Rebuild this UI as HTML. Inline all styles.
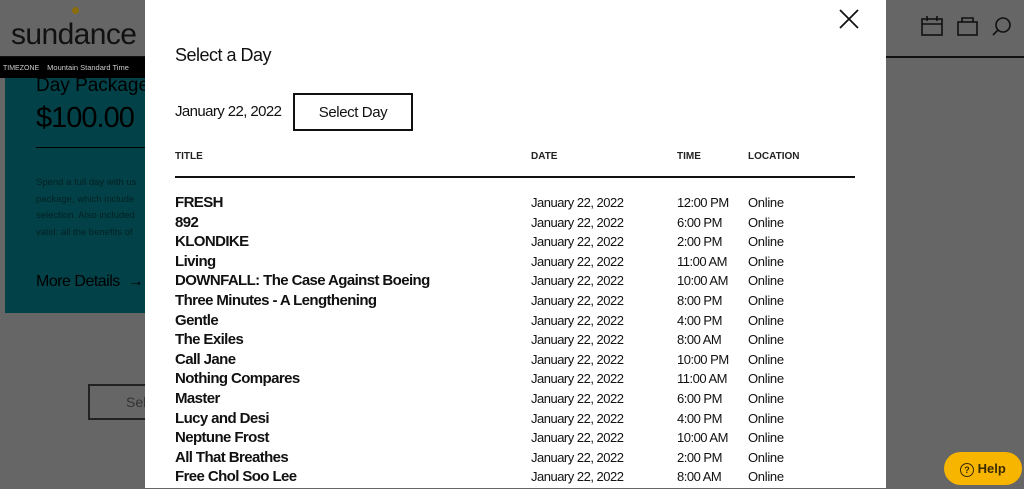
<!DOCTYPE html><html><head><style>
body{margin:0;width:1024px;height:488px;overflow:hidden;background:#666;font-family:"Liberation Sans",sans-serif;position:relative}
.a{position:absolute}
.row{position:absolute;left:175px;width:700px;height:19.6px;font-size:14px;color:#111}
.row span{position:absolute;top:0}
</style></head><body>
<div class="a" style="left:0;top:0;width:1024px;height:56px;background:#666;border-bottom:2px solid #111"></div>
<div class="a" style="left:72px;top:7px;width:7px;height:7px;border-radius:50%;background:#8a6d0a"></div>
<div class="a" style="left:11px;top:18px;font-size:30px;color:#111;letter-spacing:-0.6px">sundance</div>
<div class="a" style="left:0;top:57px;width:145px;height:21px;background:#000;color:#ccc;font-size:7px;line-height:21px"><span style="margin-left:3px">TIMEZONE</span><span style="margin-left:8px;font-size:7.5px">Mountain Standard Time</span></div>
<div class="a" style="left:5px;top:78px;width:140px;height:235px;background:#024148"></div>
<div class="a" style="left:36px;top:75px;font-size:19px;color:#000">Day Package</div>
<div class="a" style="left:36px;top:102px;font-size:29px;color:#000;letter-spacing:-1px">$100.00</div>
<div class="a" style="left:36px;top:147px;width:109px;height:1px;background:#000"></div>
<div class="a" style="left:36px;top:175px;font-size:9.5px;line-height:16.5px;color:#022;white-space:nowrap">Spend a full day with us<br>package, which include<br>selection. Also included<br>valid: all the benefits of</div>
<div class="a" style="left:36px;top:273px;font-size:16px;color:#000;letter-spacing:-0.5px">More Details &nbsp;→</div>
<div class="a" style="left:88px;top:384px;width:60px;height:36px;border:2px solid #222;box-sizing:border-box;font-size:14px;color:#333;line-height:32px;padding-left:36px">Sel</div>
<svg class="a" style="left:915px;top:14px" width="100" height="26" fill="none" stroke="#111" stroke-width="1.6"><rect x="7" y="5" width="20" height="16"/><line x1="7" y1="10" x2="27" y2="10"/><line x1="12" y1="2" x2="12" y2="7"/><line x1="22" y1="2" x2="22" y2="7"/><rect x="43" y="8" width="19" height="13"/><path d="M47 8V4h11v4"/><circle cx="88" cy="11" r="7"/><line x1="83" y1="16" x2="78" y2="21"/></svg>
<div class="a" style="left:944px;top:452px;width:78px;height:33px;border-radius:17px;background:#f7b500;font-weight:bold;font-size:13px;color:#3a2c00;line-height:33px;white-space:nowrap"><span style="display:inline-block;margin-left:16px;width:12px;height:12px;border:1.5px solid #3a2c00;border-radius:50%;font-size:9px;line-height:12px;text-align:center;vertical-align:middle">?</span> Help</div>
<div class="a" style="left:145px;top:0;width:741px;height:488px;background:#fff"></div>
<svg class="a" style="left:838px;top:8px" width="22" height="22" stroke="#111" stroke-width="1.8"><line x1="2" y1="2" x2="20" y2="20"/><line x1="20" y1="2" x2="2" y2="20"/></svg>
<div class="a" style="left:175px;top:45px;font-size:18px;color:#111;letter-spacing:-0.5px">Select a Day</div>
<div class="a" style="left:175px;top:103px;font-size:15px;color:#111;letter-spacing:-0.6px">January 22, 2022</div>
<div class="a" style="left:293px;top:93px;width:120px;height:38px;border:2px solid #111;box-sizing:border-box;font-size:15px;text-align:center;line-height:36px;color:#111;letter-spacing:-0.4px">Select Day</div>
<div class="row" style="top:151px;font-size:10px;font-weight:bold;color:#222"><span style="left:0">TITLE</span><span style="left:356px">DATE</span><span style="left:502px">TIME</span><span style="left:573px">LOCATION</span></div>
<div class="a" style="left:175px;top:176px;width:680px;height:2px;background:#111"></div>
<div id="rows"></div>
<script>
var d=[["FRESH","12:00 PM"],["892","6:00 PM"],["KLONDIKE","2:00 PM"],["Living","11:00 AM"],["DOWNFALL: The Case Against Boeing","10:00 AM"],["Three Minutes - A Lengthening","8:00 PM"],["Gentle","4:00 PM"],["The Exiles","8:00 AM"],["Call Jane","10:00 PM"],["Nothing Compares","11:00 AM"],["Master","6:00 PM"],["Lucy and Desi","4:00 PM"],["Neptune Frost","10:00 AM"],["All That Breathes","2:00 PM"],["Free Chol Soo Lee","8:00 AM"]];
var h="";d.forEach(function(r,i){h+='<div class="row" style="top:'+(195+i*19.6)+'px"><span style="left:0;font-weight:bold;font-size:15px;letter-spacing:-0.6px;top:-1px">'+r[0]+'</span><span style="left:356px;font-size:13px;letter-spacing:-0.5px">January 22, 2022</span><span style="left:502px;font-size:13px;letter-spacing:-0.5px">'+r[1]+'</span><span style="left:573px;font-size:13px;letter-spacing:-0.3px">Online</span></div>'});
document.getElementById("rows").innerHTML=h;
</script>
</body></html>
